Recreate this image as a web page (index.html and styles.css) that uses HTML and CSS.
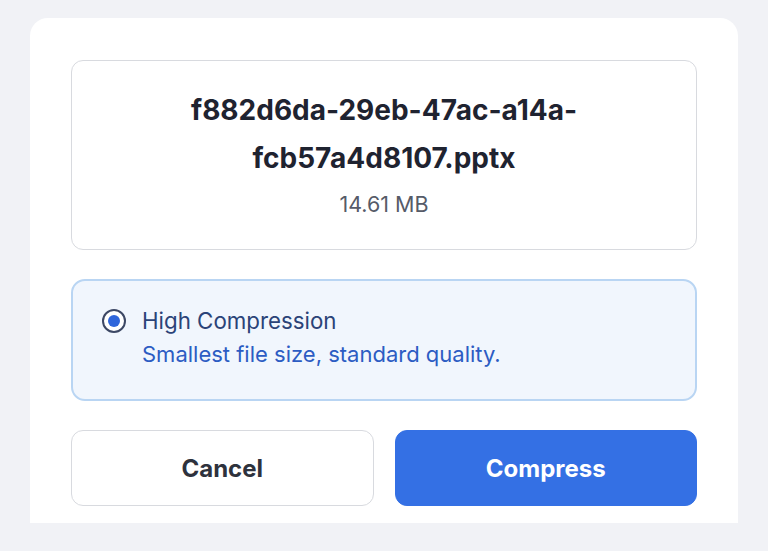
FILE: index.html
```html
<!DOCTYPE html>
<html lang="en">
<head>
<meta charset="utf-8">
<title>Compress</title>
<link rel="stylesheet" href="styles.css">
</head>
<body>
<div class="card">
  <div class="file-box">
    <div class="file-name">f882d6da-29eb-47ac-a14a-fcb57a4d8107.pptx</div>
    <div class="file-size">14.61 MB</div>
  </div>
  <label class="option">
    <span class="radio"><span class="dot"></span></span>
    <span class="option-text">
      <span class="option-title">High Compression</span>
      <span class="option-desc">Smallest file size, standard quality.</span>
    </span>
  </label>
  <div class="actions">
    <button class="btn btn-cancel">Cancel</button>
    <button class="btn btn-primary">Compress</button>
  </div>
</div>
</body>
</html>
```
FILE: styles.css
```css
* { box-sizing: border-box; }
html, body { margin: 0; padding: 0; }
body {
  background: #f1f2f6;
  font-family: "Inter", "Noto Sans", sans-serif;
  width: 768px;
  height: 551px;
  overflow: hidden;
}
.card {
  margin: 18px 30px 0;
  width: 708px;
  height: 505px;
  background: #ffffff;
  border-radius: 18px 18px 0 0;
  padding: 42px 41px 0;
  display: flex;
  flex-direction: column;
  gap: 29px;
}
.file-box {
  border: 1px solid #d8dadf;
  border-radius: 12px;
  height: 190px;
  padding: 25px 30px 23px;
  text-align: center;
}
.file-name {
  font-size: 28px;
  font-weight: 700;
  line-height: 48px;
  color: #1f2330;
}
.file-size {
  font-size: 21.5px;
  line-height: 44px;
  color: #565b68;
}
.option {
  height: 122px;
  border: 2px solid #b9d5f3;
  background: #f1f6fd;
  border-radius: 14px;
  display: flex;
  align-items: flex-start;
  padding: 25px 29px 0;
  gap: 16px;
}
.radio {
  margin-top: 3px;
  width: 24px;
  height: 24px;
  border: 2px solid #3d4865;
  border-radius: 50%;
  display: flex;
  align-items: center;
  justify-content: center;
  background: #ffffff;
  flex: none;
}
.dot {
  width: 12px;
  height: 12px;
  border-radius: 50%;
  background: #2f66db;
}
.option-text {
  display: flex;
  flex-direction: column;
  gap: 3px;
}
.option-title {
  font-size: 22.3px;
  line-height: 30px;
  color: #2b4378;
}
.option-desc {
  font-size: 22px;
  line-height: 30px;
  color: #2c5cc3;
}
.actions {
  display: flex;
  gap: 21px;
}
.btn {
  flex: 1;
  height: 76px;
  border-radius: 12px;
  font-family: inherit;
  font-size: 24px;
  font-weight: 700;
  cursor: pointer;
}
.btn-cancel {
  background: #ffffff;
  border: 1px solid #d8dadf;
  color: #2e323d;
}
.btn-primary {
  background: #3470e4;
  border: 1px solid #3470e4;
  color: #ffffff;
}
```
